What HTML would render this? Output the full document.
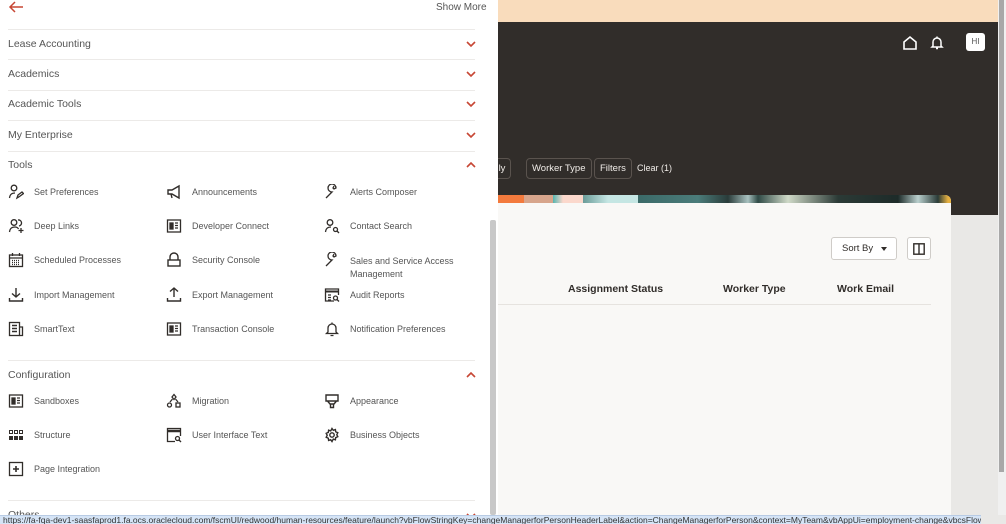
<!DOCTYPE html>
<html><head><meta charset="utf-8"><style>
*{margin:0;padding:0;box-sizing:border-box}
body{width:1006px;height:524px;overflow:hidden;position:relative;font-family:"Liberation Sans",sans-serif;background:#e9e8e6}
.a{position:absolute}
.peach{left:498px;top:0;width:500px;height:22px;background:#f9dcbc}
.dark{left:498px;top:22px;width:500px;height:193px;background:#312d2a}
.card{left:498px;top:195px;width:453px;height:320px;background:#f9f8f6;border-radius:0 6px 0 0;overflow:hidden}
.banner{left:0;top:0;width:453px;height:8px;background:linear-gradient(90deg,#f37a3d 0,#f37a3d 26px,#d7a58c 26px,#d7a58c 55px,#55b5b0 55px,#fbd8cc 65px,#fbd8cc 85px,#6a9b98 85px,#c5e6e3 110px,#c5e6e3 140px,#3b6a68 140px,#4b7c7a 200px,#2a3c3a 230px,#a8c1bf 250px,#2f4a46 260px,#cfd9c7 290px,#2b3a36 340px,#1d2b29 400px,#b9cfcd 420px,#2a3b38 440px,#e6b040 450px)}
.chip{border:1px solid #5a534e;border-radius:4px;color:#f0ece8;font-size:9.5px;height:21px;line-height:19px;padding:0 5px;top:136px}
.vsb{left:998px;top:0;width:8px;height:515px;background:#f0f0f0}
.vsb i{position:absolute;left:1px;top:0;width:5px;height:472px;background:#a8a8a8}
.drawer{left:0;top:0;width:498px;height:524px;background:#fff}
.dsb{left:490px;top:220px;width:6px;height:295px;background:#c8c8c8;border-radius:2px}
.hdr{left:8px;font-size:10.5px;color:#555}
.line{left:8px;width:467px;height:1px;background:#eceae8}
.chev{left:465px;width:12px;height:8px}
.it{font-size:9px;color:#555}
.ic{width:16px;height:16px}
.status{left:0;top:515px;width:981px;height:9px;background:#d5e4f6;border-top:1px solid #b8cbe4;font-size:8.5px;line-height:9px;color:#333;white-space:nowrap;overflow:hidden;padding-left:3px}
</style></head><body>
<div class="a peach"></div>
<div class="a dark">
 <svg class="a" style="left:404px;top:13px" width="16" height="16" viewBox="0 0 16 16"><path d="M2 7 L8 2 L14 7 V14 H2 Z" fill="none" stroke="#fff" stroke-width="1.6"/></svg>
 <svg class="a" style="left:431px;top:13px" width="16" height="16" viewBox="0 0 16 16"><path d="M4 11 V7 a4 4 0 0 1 8 0 V11 L13 12 H3 Z M7 13.5 h2" fill="none" stroke="#fff" stroke-width="1.5"/><path d="M8 1.5 v1.5" stroke="#fff" stroke-width="1.5"/></svg>
 <div class="a" style="left:468px;top:11px;width:19px;height:18px;background:#fff;border-radius:3px;font-size:8px;color:#555;text-align:center;line-height:18px">HI</div>
 <div class="a chip" style="left:-10px;border-left:none;padding-left:0">only</div>
 <div class="a chip" style="left:28px">Worker Type</div>
 <div class="a chip" style="left:96px">Filters</div>
 <div class="a" style="left:139px;top:136px;font-size:9px;color:#f0ece8;line-height:21px">Clear (1)</div>
</div>
<div class="a card">
 <div class="a banner"></div>
 <div class="a" style="left:333px;top:42px;width:66px;height:23px;border:1px solid #cfccc8;border-radius:3px;background:#fff;font-size:9.5px;color:#312d2a;line-height:21px;padding-left:10px">Sort By <span style="position:absolute;right:9px;top:9px;border:3.5px solid transparent;border-top:4px solid #312d2a"></span></div>
 <div class="a" style="left:409px;top:42px;width:24px;height:23px;border:1px solid #cfccc8;border-radius:3px;background:#fff"><svg class="a" style="left:5px;top:5px" width="12" height="12" viewBox="0 0 12 12"><rect x="0.8" y="0.8" width="10.4" height="10.4" fill="none" stroke="#312d2a" stroke-width="1.4"/><path d="M6 1 V11" stroke="#312d2a" stroke-width="1.4"/></svg></div>
 <div class="a" style="left:70px;top:88px;font-size:10.5px;color:#312d2a;font-weight:bold">Assignment Status</div>
 <div class="a" style="left:225px;top:88px;font-size:10.5px;color:#312d2a;font-weight:bold">Worker Type</div>
 <div class="a" style="left:339px;top:88px;font-size:10.5px;color:#312d2a;font-weight:bold">Work Email</div>
 <div class="a" style="left:0;top:109px;width:433px;height:1px;background:#e6e3df"></div>
</div>
<div class="a vsb"><i></i></div>

<div class="a drawer">
 <svg class="a" style="left:8px;top:1px" width="16" height="12" viewBox="0 0 16 12"><path d="M15 6 H2 M7 1 L2 6 L7 11" fill="none" stroke="#c74634" stroke-width="1.5"/></svg>
 <div class="a" style="left:436px;top:2px;font-size:10px;color:#555">Show More</div>
 <div class="a line" style="top:29px"></div>
 <div class="a hdr" style="top:38px">Lease Accounting</div>
 <div class="a line" style="top:59px"></div>
 <div class="a hdr" style="top:68px">Academics</div>
 <div class="a line" style="top:90px"></div>
 <div class="a hdr" style="top:98px">Academic Tools</div>
 <div class="a line" style="top:120px"></div>
 <div class="a hdr" style="top:129px">My Enterprise</div>
 <div class="a line" style="top:151px"></div>
 <div class="a hdr" style="top:159px">Tools</div>
 <div class="a line" style="top:360px"></div>
 <div class="a hdr" style="top:369px">Configuration</div>
 <div class="a line" style="top:500px"></div>
 <div class="a hdr" style="top:509px">Others</div>
 <svg class="a chev" style="top:40px" viewBox="0 0 12 8"><path d="M2 2 L6 6 L10 2" fill="none" stroke="#c74634" stroke-width="1.6"/></svg>
 <svg class="a chev" style="top:70px" viewBox="0 0 12 8"><path d="M2 2 L6 6 L10 2" fill="none" stroke="#c74634" stroke-width="1.6"/></svg>
 <svg class="a chev" style="top:100px" viewBox="0 0 12 8"><path d="M2 2 L6 6 L10 2" fill="none" stroke="#c74634" stroke-width="1.6"/></svg>
 <svg class="a chev" style="top:131px" viewBox="0 0 12 8"><path d="M2 2 L6 6 L10 2" fill="none" stroke="#c74634" stroke-width="1.6"/></svg>
 <svg class="a chev" style="top:161px" viewBox="0 0 12 8"><path d="M2 6 L6 2 L10 6" fill="none" stroke="#c74634" stroke-width="1.6"/></svg>
 <svg class="a chev" style="top:371px" viewBox="0 0 12 8"><path d="M2 6 L6 2 L10 6" fill="none" stroke="#c74634" stroke-width="1.6"/></svg>
 <svg class="a chev" style="top:512px" viewBox="0 0 12 8"><path d="M2 2 L6 6 L10 2" fill="none" stroke="#c74634" stroke-width="1.6"/></svg>

 <svg class="a ic" style="left:8px;top:184px" viewBox="0 0 16 16" fill="none" stroke="#312d2a" stroke-width="1.3"><circle cx="6" cy="4" r="2.8"/><path d="M1.5 14 C2 10 4 9 7 9"/><path d="M9 14 l1-3 4-3 1.5 1.5-4 3z"/></svg>
 <div class="a it" style="left:34px;top:187px">Set Preferences</div>
 <svg class="a ic" style="left:166px;top:184px" viewBox="0 0 16 16" fill="none" stroke="#312d2a" stroke-width="1.4"><path d="M2 6 H6 L13 2 V14 L6 10 H2 Z M5 10 L6 14"/></svg>
 <div class="a it" style="left:192px;top:187px">Announcements</div>
 <svg class="a ic" style="left:324px;top:184px" viewBox="0 0 16 16" fill="none" stroke="#312d2a" stroke-width="1.3"><path d="M2 14 L8 8 A4 4 0 1 1 12 4 l-2 1 -1 -1 1-2"/></svg>
 <div class="a it" style="left:350px;top:187px">Alerts Composer</div>

 <svg class="a ic" style="left:8px;top:218px" viewBox="0 0 16 16" fill="none" stroke="#312d2a" stroke-width="1.3"><circle cx="6" cy="4.5" r="2.8"/><path d="M1.5 14 C2 10 4 9 7 9 C9 9 10 10 10.5 11"/><path d="M10 2 A3 3 0 0 1 11 8"/><path d="M13 10 v5 M10.5 12.5 h5"/></svg>
 <div class="a it" style="left:34px;top:221px">Deep Links</div>
 <svg class="a ic" style="left:166px;top:218px" viewBox="0 0 16 16" fill="none" stroke="#312d2a" stroke-width="1.3"><rect x="1.5" y="2" width="13" height="12"/><rect x="4" y="5" width="3" height="6" fill="#312d2a"/><path d="M9 5 h3 M9 7.5 h3 M9 10 h3"/></svg>
 <div class="a it" style="left:192px;top:221px">Developer Connect</div>
 <svg class="a ic" style="left:324px;top:218px" viewBox="0 0 16 16" fill="none" stroke="#312d2a" stroke-width="1.3"><circle cx="6" cy="4.5" r="2.8"/><path d="M1.5 14 C2 10 4 9 7 9"/><circle cx="11.5" cy="11.5" r="2"/><path d="M13 13 l2 2"/></svg>
 <div class="a it" style="left:350px;top:221px">Contact Search</div>

 <svg class="a ic" style="left:8px;top:252px" viewBox="0 0 16 16" fill="none" stroke="#312d2a" stroke-width="1.3"><rect x="1.5" y="3" width="13" height="11.5"/><path d="M4.5 1 v3 M11.5 1 v3 M1.5 6 h13"/><path d="M4 8.5h8M4 10.5h8M4 12.5h8" stroke-dasharray="1 1"/></svg>
 <div class="a it" style="left:34px;top:255px">Scheduled Processes</div>
 <svg class="a ic" style="left:166px;top:252px" viewBox="0 0 16 16" fill="none" stroke="#312d2a" stroke-width="1.4"><path d="M4 8 V5 a4 4 0 0 1 8 0 V8"/><rect x="2" y="8" width="12" height="6"/></svg>
 <div class="a it" style="left:192px;top:255px">Security Console</div>
 <svg class="a ic" style="left:324px;top:252px" viewBox="0 0 16 16" fill="none" stroke="#312d2a" stroke-width="1.3"><path d="M2 14 L8 8 A4 4 0 1 1 12 4 l-2 1 -1 -1 1-2"/></svg>
 <div class="a it" style="left:350px;top:255px;line-height:12.5px">Sales and Service Access<br>Management</div>

 <svg class="a ic" style="left:8px;top:287px" viewBox="0 0 16 16" fill="none" stroke="#312d2a" stroke-width="1.4"><path d="M8 1 V10 M4 6.5 L8 10 L12 6.5 M1.5 11 V14 H14.5 V11"/></svg>
 <div class="a it" style="left:34px;top:290px">Import Management</div>
 <svg class="a ic" style="left:166px;top:287px" viewBox="0 0 16 16" fill="none" stroke="#312d2a" stroke-width="1.4"><path d="M8 10 V1 M4 4.5 L8 1 L12 4.5 M1.5 11 V14 H14.5 V11"/></svg>
 <div class="a it" style="left:192px;top:290px">Export Management</div>
 <svg class="a ic" style="left:324px;top:287px" viewBox="0 0 16 16" fill="none" stroke="#312d2a" stroke-width="1.3"><path d="M10 14 H1.5 V2 H14.5 V8"/><path d="M1.5 4.5 h13" stroke-width="2"/><path d="M4 8h3M4 10.5h3M4 13h3"/><circle cx="11.5" cy="11" r="2"/><path d="M13 12.5 l2 2"/></svg>
 <div class="a it" style="left:350px;top:290px">Audit Reports</div>

 <svg class="a ic" style="left:8px;top:321px" viewBox="0 0 16 16" fill="none" stroke="#312d2a" stroke-width="1.3"><rect x="1.5" y="1.5" width="10" height="13"/><path d="M11.5 6 h3 v8.5 h-3"/><path d="M4 4.5h5M4 7.5h5M4 10.5h5" stroke-width="1.6"/></svg>
 <div class="a it" style="left:34px;top:324px">SmartText</div>
 <svg class="a ic" style="left:166px;top:321px" viewBox="0 0 16 16" fill="none" stroke="#312d2a" stroke-width="1.3"><rect x="1.5" y="2" width="13" height="12"/><rect x="4" y="5" width="3" height="6" fill="#312d2a"/><path d="M9 5 h3 M9 7.5 h3 M9 10 h3"/></svg>
 <div class="a it" style="left:192px;top:324px">Transaction Console</div>
 <svg class="a ic" style="left:324px;top:321px" viewBox="0 0 16 16" fill="none" stroke="#312d2a" stroke-width="1.3"><path d="M4 11 V7 a4 4 0 0 1 8 0 V11 L13.5 12.5 H2.5 Z M6.5 14.5 h3"/><path d="M8 1.5 v1.5"/></svg>
 <div class="a it" style="left:350px;top:324px">Notification Preferences</div>

 <svg class="a ic" style="left:8px;top:393px" viewBox="0 0 16 16" fill="none" stroke="#312d2a" stroke-width="1.3"><rect x="1.5" y="2" width="13" height="12"/><rect x="4" y="5" width="3" height="6" fill="#312d2a"/><path d="M9 5 h3 M9 7.5 h3 M9 10 h3"/></svg>
 <div class="a it" style="left:34px;top:396px">Sandboxes</div>
 <svg class="a ic" style="left:166px;top:393px" viewBox="0 0 16 16" fill="none" stroke="#312d2a" stroke-width="1.3"><path d="M8 1.5 L10 4 L8 6.5 L6 4 Z"/><path d="M6.5 6 L4 9 M9.5 6 L12 9"/><circle cx="3.5" cy="12" r="2"/><rect x="10" y="10" width="4" height="4"/></svg>
 <div class="a it" style="left:192px;top:396px">Migration</div>
 <svg class="a ic" style="left:324px;top:393px" viewBox="0 0 16 16" fill="none" stroke="#312d2a" stroke-width="1.4"><path d="M2 2 H14 V8 H2 Z M3.5 8 L6 11 H10 L12.5 8 M6.5 11 V14.5 H9.5 V11"/></svg>
 <div class="a it" style="left:350px;top:396px">Appearance</div>

 <svg class="a ic" style="left:8px;top:427px" viewBox="0 0 16 16" fill="#312d2a"><rect x="1" y="3" width="4" height="4"/><rect x="6" y="3" width="4" height="4"/><rect x="11" y="3" width="4" height="4"/><rect x="1" y="9" width="4" height="4"/><rect x="6" y="9" width="4" height="4"/><rect x="11" y="9" width="4" height="4"/><rect x="2" y="4" width="2" height="2" fill="#fff"/><rect x="7" y="4" width="2" height="2" fill="#fff"/><rect x="12" y="4" width="2" height="2" fill="#fff"/></svg>
 <div class="a it" style="left:34px;top:430px">Structure</div>
 <svg class="a ic" style="left:166px;top:427px" viewBox="0 0 16 16" fill="none" stroke="#312d2a" stroke-width="1.3"><path d="M9 14.5 H1.5 V1.5 H14.5 V9"/><path d="M1.5 4 h13" stroke-width="2.5"/><circle cx="11.5" cy="11.5" r="2"/><path d="M13 13 l2 2"/></svg>
 <div class="a it" style="left:192px;top:430px">User Interface Text</div>
 <svg class="a ic" style="left:324px;top:427px" viewBox="0 0 16 16" fill="none" stroke="#312d2a" stroke-width="1.4"><circle cx="8" cy="8" r="2.2"/><path d="M8 1.5 l1.3 1.8 2.1-.7.3 2.2 2.1.9-1 2 1 2-2.1.9-.3 2.2-2.1-.7L8 14.5l-1.3-1.8-2.1.7-.3-2.2-2.1-.9 1-2-1-2 2.1-.9.3-2.2 2.1.7z"/></svg>
 <div class="a it" style="left:350px;top:430px">Business Objects</div>

 <svg class="a ic" style="left:8px;top:461px" viewBox="0 0 16 16" fill="none" stroke="#312d2a" stroke-width="1.3"><rect x="1.5" y="1.5" width="13" height="13"/><path d="M8 5 V11 M5 8 H11" stroke-width="1.6"/></svg>
 <div class="a it" style="left:34px;top:464px">Page Integration</div>
</div>
<div class="a dsb"></div>
<div class="a status">https://fa-fqa-dev1-saasfaprod1.fa.ocs.oraclecloud.com/fscmUI/redwood/human-resources/feature/launch?vbFlowStringKey=changeManagerforPersonHeaderLabel&amp;action=ChangeManagerforPerson&amp;context=MyTeam&amp;vbAppUi=employment-change&amp;vbcsFlow=update&amp;vbPage</div>
</body></html>
